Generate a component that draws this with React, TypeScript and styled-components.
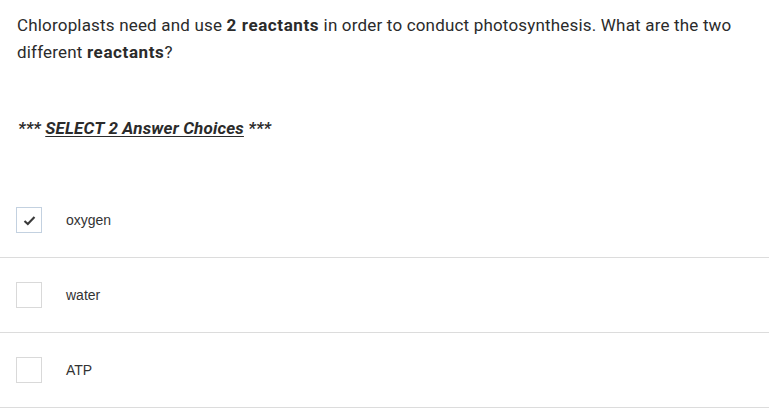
import React from "react";
import styled, { createGlobalStyle } from "styled-components";

const Global = createGlobalStyle`
  html, body { margin: 0; padding: 0; background: #fff; }
  body { font-family: "Liberation Sans", Arial, sans-serif; color: #2b2b2b; }
`;

const Page = styled.div`
  width: 769px;
  display: flex;
  flex-direction: column;
`;

const Question = styled.p`
  margin: 0;
  padding: 12px 17px 0 17px;
  font-family: "Roboto", "Liberation Sans", sans-serif;
  font-size: 17px;
  line-height: 27px;
  letter-spacing: 0.18px;
  color: #2b2b2b;
  b { font-weight: 700; letter-spacing: 0.6px; }
`;

const Instruction = styled.p`
  margin: 49px 0 41px 0;
  padding: 0 18px;
  font-family: "Roboto", "Liberation Sans", sans-serif;
  font-size: 17px;
  line-height: 27px;
  letter-spacing: 0.15px;
  font-weight: 700;
  font-style: italic;
  color: #2b2b2b;
  u { text-decoration-thickness: 1px; text-underline-offset: 2px; }
`;

const Options = styled.div`
  display: flex;
  flex-direction: column;
`;

const Row = styled.label`
  display: flex;
  align-items: center;
  gap: 24px;
  height: 74px;
  padding-left: 16px;
  border-bottom: 1px solid #dcdcdc;
  cursor: pointer;
`;

const Box = styled.span<{ $checked: boolean }>`
  box-sizing: border-box;
  width: 26px;
  height: 26px;
  border: 1px solid ${(p) => (p.$checked ? "#c3d1e0" : "#d9d9d9")};
  display: flex;
  align-items: center;
  justify-content: center;
  background: #fff;
`;

const Label = styled.span`
  font-family: "Liberation Sans", Arial, sans-serif;
  font-size: 14px;
  color: #333;
`;

const Check = () => (
  <svg width="13" height="11" viewBox="0 0 13 11">
    <path d="M1.5 6 L4.8 9 L11.5 2" fill="none" stroke="#3a3a3a" strokeWidth="2.1" />
  </svg>
);

const options = [
  { text: "oxygen", checked: true },
  { text: "water", checked: false },
  { text: "ATP", checked: false },
];

export default function App() {
  return (
    <Page>
      <Global />
      <Question>
        Chloroplasts need and use <b>2 reactants</b> in order to conduct photosynthesis. What are the two
        different <b>reactants</b>?
      </Question>
      <Instruction>
        *** <u>SELECT 2 Answer Choices</u> ***
      </Instruction>
      <Options>
        {options.map((o) => (
          <Row key={o.text}>
            <Box $checked={o.checked}>{o.checked && <Check />}</Box>
            <Label>{o.text}</Label>
          </Row>
        ))}
      </Options>
    </Page>
  );
}
